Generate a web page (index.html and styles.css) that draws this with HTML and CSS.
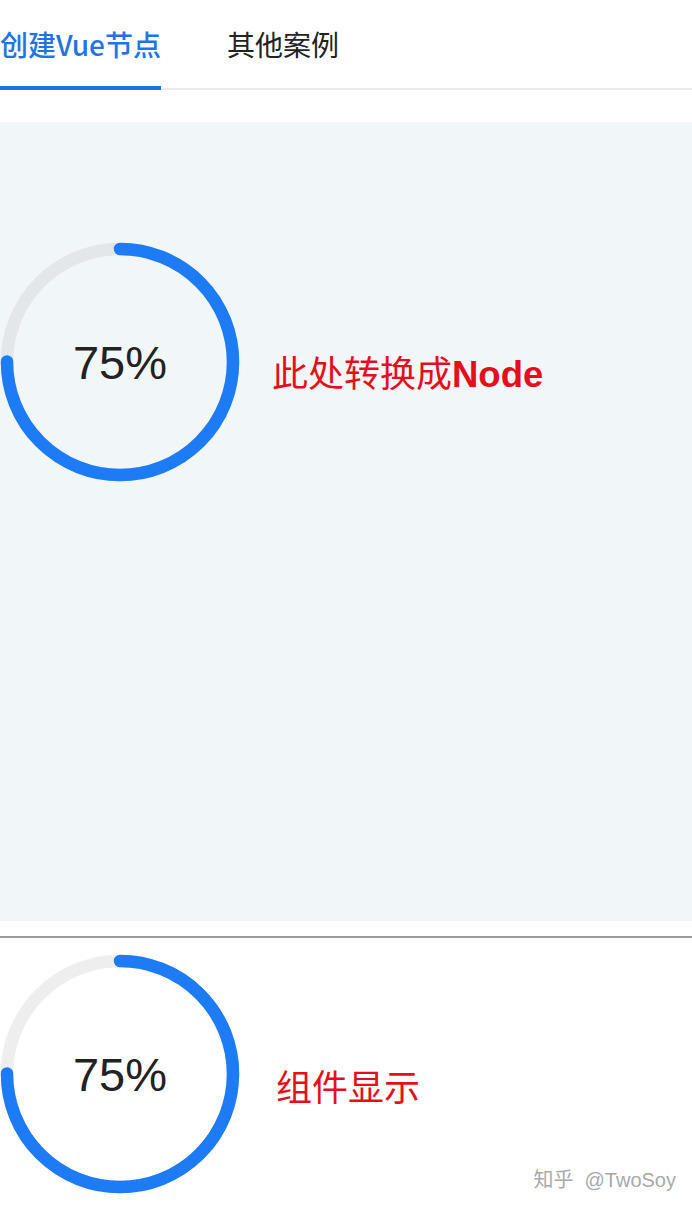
FILE: index.html
```html
<!DOCTYPE html>
<html lang="zh-CN">

<head>
  <meta charset="UTF-8">
  <meta name="viewport" content="width=device-width, initial-scale=1.0">
  <title>创建Vue节点</title>
  <link rel="stylesheet" href="styles.css">
</head>

<body>
  <nav class="tabs">
    <div class="tab active">创建Vue节点</div>
    <div class="tab">其他案例</div>
  </nav>

  <!-- circle rendered, then turned into a node -->
  <section class="panel">
    <div class="row">
      <div class="ring">
        <svg width="240" height="240" viewBox="0 0 240 240">
          <circle class="track" cx="120" cy="120" r="113" />
          <circle class="bar" cx="120" cy="120" r="113" stroke-dasharray="532.5 710" />
        </svg>
        <span class="percent">75%</span>
      </div>
      <p class="label">此处转换成<b>Node</b></p>
    </div>
  </section>

  <hr class="divider">

  <!-- same circle as a plain component -->
  <section class="plain">
    <div class="row">
      <div class="ring">
        <svg width="240" height="240" viewBox="0 0 240 240">
          <circle class="track light" cx="120" cy="120" r="113" />
          <circle class="bar" cx="120" cy="120" r="113" stroke-dasharray="532.5 710" />
        </svg>
        <span class="percent">75%</span>
      </div>
      <p class="label second">组件显示</p>
    </div>
  </section>

  <div class="mark">知乎&nbsp; @TwoSoy</div>
</body>

</html>
```

FILE: styles.css
```css
:root {
  --blue: #1d7bf6;
  --tab-blue: #1f74e3;
  --red: #e3101b;
  --text: #222;
  --panel: #f1f6f9;
  --line: #e9ebee;
}

html,
body {
  margin: 0;
  background: #fff;
}

body {
  position: relative;
  height: 1210px;
  overflow: hidden;
  font-family: "Liberation Sans", "Noto Sans CJK SC", sans-serif;
  color: var(--text);
}

/* tab bar */
.tabs {
  display: flex;
  gap: 66px;
  height: 88px;
  border-bottom: 2px solid var(--line);
}

.tab {
  height: 62px;
  padding: 24px 0 0;
  line-height: 40px;
  font-size: 28px;
  font-family: "Noto Sans CJK SC", sans-serif;
  color: #222;
}

.tab.active {
  color: var(--tab-blue);
  font-weight: 500;
  border-bottom: 4px solid var(--tab-blue);
}

/* progress rows */
.panel {
  box-sizing: border-box;
  height: 799px;
  margin-top: 32px;
  padding-top: 120px;
  background: var(--panel);
}

.row {
  display: flex;
  align-items: center;
  gap: 32px;
}

.ring {
  display: grid;
  place-items: center;
  width: 240px;
  height: 240px;
}

.ring svg,
.percent {
  grid-area: 1 / 1;
}

.ring svg {
  transform: rotate(-90deg);
}

.track {
  fill: none;
  stroke: #e3e7ea;
  stroke-width: 12.5;
}

.track.light {
  stroke: #eeeeee;
}

.bar {
  fill: none;
  stroke: var(--blue);
  stroke-width: 12.5;
  stroke-linecap: round;
}

.percent {
  font-size: 47px;
  color: var(--text);
}

.label {
  margin: 18px 0 0;
  font-family: "Noto Sans CJK SC", sans-serif;
  font-size: 36px;
  color: var(--red);
}

.label b {
  font-family: "Liberation Sans", sans-serif;
  font-weight: bold;
  font-size: 36.5px;
}

.label.second {
  margin: 22px 0 0 4px;
}

.divider {
  height: 2px;
  margin: 15px 0 0;
  border: 0;
  background: #9a9a9a;
}

.plain {
  padding-top: 16px;
}

/* watermark over the corner */
.mark {
  position: absolute;
  right: 16px;
  bottom: 17px;
  font-family: "Liberation Sans", "Noto Sans CJK SC", sans-serif;
  font-size: 20px;
  color: #a9a9a9;
  text-shadow: 0 0 2px #fff;
}
```
